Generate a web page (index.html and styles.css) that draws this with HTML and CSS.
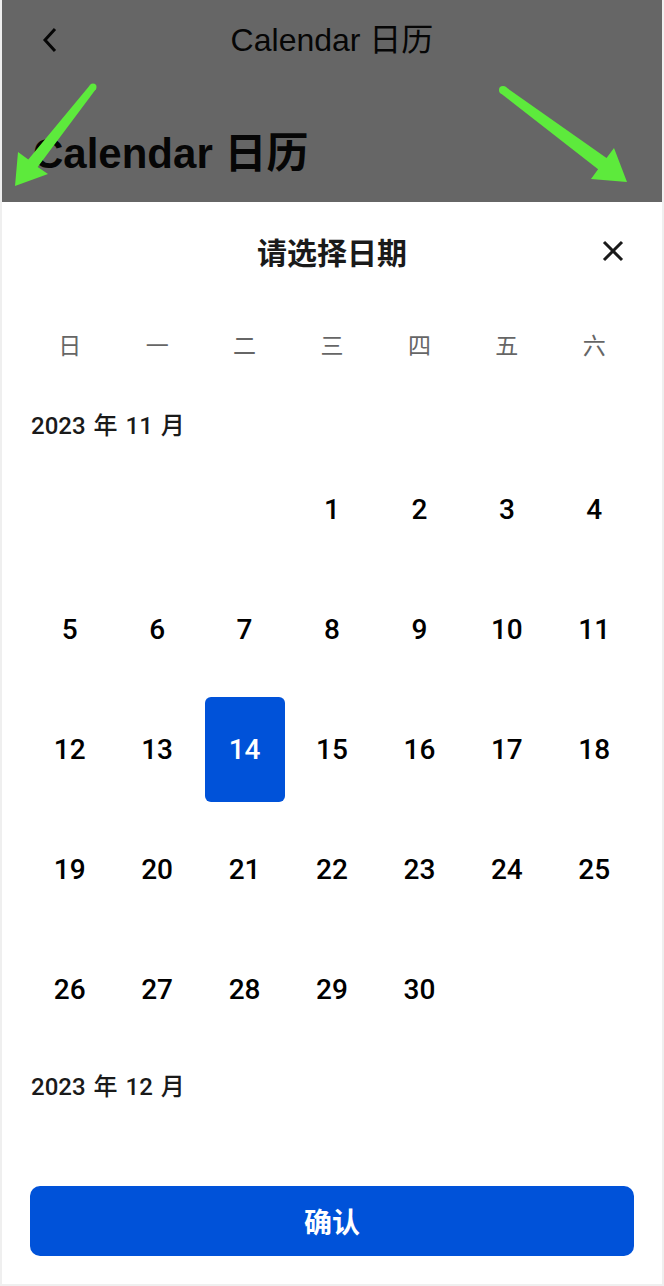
FILE: index.html
```html
<!DOCTYPE html>
<html lang="zh-CN">
<head>
  <meta charset="UTF-8">
  <title>Calendar 日历</title>
  <meta name="viewport" content="width=device-width, initial-scale=1.0">
  <link rel="stylesheet" href="styles.css">
</head>
<body>
  <div class="screen">
    <div class="page">
      <div class="navbar">
        <span class="nav-back">
          <svg width="16" height="26" viewBox="0 0 16 26"><path d="M13 2 L3 13 L13 24" fill="none" stroke="#111" stroke-width="3"/></svg>
        </span>
        <span class="nav-title">Calendar 日历</span>
      </div>
      <h1 class="page-title">Calendar 日历</h1>
    </div>

    <div class="mask"></div>

    <div class="popup">
      <div class="popup-header">
        <h2>请选择日期</h2>
        <button class="close">
          <svg width="24" height="24" viewBox="0 0 24 24"><path d="M3 3 L21 21 M21 3 L3 21" stroke="#1a1a1a" stroke-width="3"/></svg>
        </button>
      </div>

      <div class="weekdays">
        <span>日</span><span>一</span><span>二</span><span>三</span><span>四</span><span>五</span><span>六</span>
      </div>

      <div class="months">
        <div class="month-title">2023 年 11 月</div>
        <div class="days" id="nov"></div>
        <div class="month-title">2023 年 12 月</div>
      </div>

      <div class="footer">
        <button class="confirm">确认</button>
      </div>
    </div>
  </div>

  <!-- annotation arrows -->
  <svg class="arrows" width="664" height="1286" viewBox="0 0 664 1286">
    <g fill="#5dea3c">
      <circle cx="93" cy="87" r="3.5"/>
      <polygon points="90.3,84.8 28.3,159.5 18,152 15,186 48,174 37.7,166.9 95.8,89.2"/>
      <circle cx="503" cy="90" r="4"/>
      <polygon points="505.4,86.8 606.5,158.1 614,148 627,182 591,179 598.1,169.3 500.6,93.2"/>
    </g>
  </svg>

  <script>
    function renderMonth(el, offset, total, selected) {
      let html = '';
      for (let i = 0; i < offset; i++) html += '<div class="cell"></div>';
      for (let d = 1; d <= total; d++) {
        const cls = d === selected ? 'day selected' : 'day';
        html += `<div class="cell"><span class="${cls}">${d}</span></div>`;
      }
      el.innerHTML = html;
    }

    renderMonth(document.getElementById('nov'), 3, 30, 14);
  </script>
</body>
</html>
```

FILE: styles.css
```css
* {
  box-sizing: border-box;
}

body {
  margin: 0;
  position: relative;
  font-family: "Liberation Sans", "Noto Sans CJK SC", sans-serif;
  background: #fff;
}

.screen {
  position: relative;
  height: 1286px;
  border: 2px solid #efefef;
  border-top: none;
  overflow: hidden;
  background: #fff;
}

/* page under the popup */
.navbar {
  height: 74px;
  display: flex;
  align-items: center;
  justify-content: center;
  position: relative;
}

.nav-back {
  position: absolute;
  left: 40px;
  top: 27px;
}

.nav-title {
  font-size: 32px;
  color: #111;
}

.page-title {
  margin: 0;
  padding: 52px 0 0 31px;
  font-size: 42px;
  font-weight: 700;
  color: #111;
  line-height: 56px;
}

.mask {
  position: absolute;
  inset: 0;
  background: rgba(0, 0, 0, 0.6);
}

/* bottom popup */
.popup {
  position: absolute;
  left: 0;
  right: 0;
  bottom: 0;
  height: 1082px;
  background: #fff;
  display: flex;
  flex-direction: column;
}

.popup-header {
  height: 98px;
  display: grid;
  grid-template-columns: 1fr auto 1fr;
  align-items: center;
}

.popup-header h2 {
  grid-column: 2;
  margin: 0;
  font-size: 30px;
  font-weight: 700;
  color: #1a1a1a;
  font-family: "Noto Sans CJK SC", sans-serif;
}

.close {
  grid-column: 3;
  justify-self: end;
  margin-right: 37px;
  padding: 0;
  border: none;
  background: none;
  display: flex;
}

.weekdays {
  height: 88px;
  padding: 0 24px;
  display: grid;
  grid-template-columns: repeat(7, 1fr);
  align-items: center;
  text-align: center;
  font-size: 23px;
  color: #666;
  font-family: "Noto Sans CJK SC", sans-serif;
}

.months {
  flex: 1;
  overflow: hidden;
}

.month-title {
  padding: 25px 29px 10px;
  line-height: 26px;
  font-size: 24px;
  font-weight: 500;
  word-spacing: 2px;
  color: #1a1a1a;
  font-family: Roboto, "Noto Sans CJK SC", sans-serif;
}

.days {
  padding: 0 24px;
  display: grid;
  grid-template-columns: repeat(7, 1fr);
}

.cell {
  height: 120px;
  display: flex;
  align-items: center;
  justify-content: center;
}

.day {
  width: 80px;
  height: 105px;
  display: flex;
  align-items: center;
  justify-content: center;
  font-family: Roboto, sans-serif;
  font-size: 28px;
  font-weight: 500;
  color: #000;
  border-radius: 6px;
}

.day.selected {
  background: #0052d9;
  color: #fff;
}

.footer {
  padding: 40px 28px 28px;
}

.confirm {
  width: 100%;
  height: 70px;
  border: none;
  border-radius: 10px;
  background: #0052d9;
  color: #fff;
  font-size: 28px;
  font-weight: 700;
  font-family: "Noto Sans CJK SC", sans-serif;
}

.arrows {
  position: absolute;
  left: 0;
  top: 0;
  pointer-events: none;
}
```
